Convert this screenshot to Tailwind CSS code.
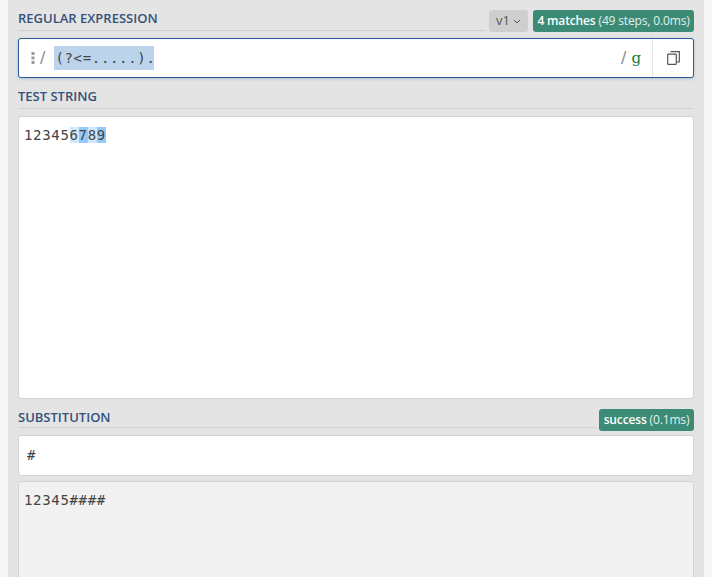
<!DOCTYPE html>
<html><head><meta charset="utf-8">
<script src="https://cdn.jsdelivr.net/npm/@tailwindcss/browser@4"></script>
</head>
<body class="m-0 h-[577px] w-[712px] overflow-hidden bg-[#f6f6f6] font-['Open_Sans',sans-serif]">
<main class="ml-2 mr-2 flex h-[577px] w-[696px] flex-col overflow-hidden bg-[#e4e4e4] px-2.5">
  <div class="flex h-[38px] shrink-0 items-start">
    <div class="mt-[10px] h-[21px] flex-1 border-b border-[#d1d1d1] text-[13px] font-semibold leading-4 text-[#34517a]">REGULAR EXPRESSION</div>
    <div class="mt-[10px] ml-[3px] flex items-center gap-[5px]">
      <div class="flex h-[22px] w-[39px] items-center justify-center gap-[3px] rounded-[3px] bg-[#cfcfcf] text-[13px] text-[#555]">v1<svg width="8" height="5" viewBox="0 0 8 5" fill="none" stroke="#555" stroke-width="1"><path d="M1 1l3 3 3-3"/></svg></div>
      <div class="flex h-[22px] w-[161px] items-center justify-center rounded-[3px] bg-[#3b8b77] text-[12px] tracking-[-0.15px] whitespace-nowrap text-white"><span class="font-semibold">4 matches</span><span class="ml-[3px] text-[#e4f0ed]">(49 steps, 0.0ms)</span></div>
    </div>
  </div>
  <div class="flex h-[40px] shrink-0 items-stretch rounded-[3px] border border-[#2a5a9c] bg-white shadow-[0_1px_3px_rgba(42,90,156,0.25)]">
    <div class="flex flex-1 items-center pl-[12px]">
      <svg width="4" height="12" viewBox="0 0 4 12" fill="#999"><rect x="0.5" y="0" width="3" height="3"/><rect x="0.5" y="4.5" width="3" height="3"/><rect x="0.5" y="9" width="3" height="3"/></svg>
      <span class="ml-[5px] font-['DejaVu_Sans'] text-[16px] text-[#888]">/</span>
      <span class="ml-[9px] flex h-[24px] w-[100px] items-center bg-[#bcd3ec] pl-[1px] font-['DejaVu_Sans_Mono'] text-[14px] tracking-[0.67px] whitespace-pre text-[#444]">(?&lt;=.....).</span>
    </div>
    <div class="flex items-center pr-[11px]"><span class="font-['DejaVu_Sans'] text-[16px] text-[#888]">/</span><span class="ml-[5px] font-['DejaVu_Serif'] text-[15px] text-[#0f7a3c]">g</span></div>
    <div class="flex w-[41px] items-center justify-center border-l border-[#e3e3e3]">
      <svg width="13" height="14" viewBox="0 0 13 14" fill="none" stroke="#555" stroke-width="1.2"><rect x="0.7" y="3.2" width="8.6" height="10.1" rx="0.5"/><path d="M3.5 0.7H12.3V11H9.3"/></svg>
    </div>
  </div>
  <div class="mt-[10px] h-[21px] shrink-0 border-b border-[#d1d1d1] text-[13px] leading-4 font-semibold text-[#34517a]">TEST STRING</div>
  <div class="mt-[7px] h-[283px] shrink-0 rounded-[3px] border border-[#d3d3d3] bg-white pt-[8px] pl-[5px] font-['DejaVu_Sans_Mono'] text-[14px] leading-[20px] tracking-[0.67px] text-[#444]"><span>12345</span><span class="bg-[#cfe8fd]">6</span><span class="bg-[#93caf9]">7</span><span class="bg-[#cfe8fd]">8</span><span class="bg-[#93caf9]">9</span></div>
  <div class="flex h-[36px] shrink-0 items-start">
    <div class="mt-[10px] h-[19px] flex-1 border-b border-[#d1d1d1] text-[13px] leading-4 font-semibold text-[#34517a]">SUBSTITUTION</div>
    <div class="mt-[10px] ml-[3px] flex h-[22px] w-[95px] items-center justify-center rounded-[3px] bg-[#3b8b77] text-[12px] tracking-[-0.15px] whitespace-nowrap text-white"><span class="font-semibold">success</span><span class="ml-[3px] text-[#e4f0ed]">(0.1ms)</span></div>
  </div>
  <div class="h-[41px] shrink-0 rounded-[3px] border border-[#d3d3d3] bg-white pt-[9px] pl-[8px] font-['DejaVu_Sans_Mono'] text-[14px] leading-[20px] text-[#444]">#</div>
  <div class="mt-[5px] h-[120px] shrink-0 rounded-[3px] border border-[#d3d3d3] bg-[#f1f1f1] pt-[8px] pl-[5px] font-['DejaVu_Sans_Mono'] text-[14px] leading-[20px] tracking-[0.67px] text-[#444]">12345####</div>
</main>
</body></html>
